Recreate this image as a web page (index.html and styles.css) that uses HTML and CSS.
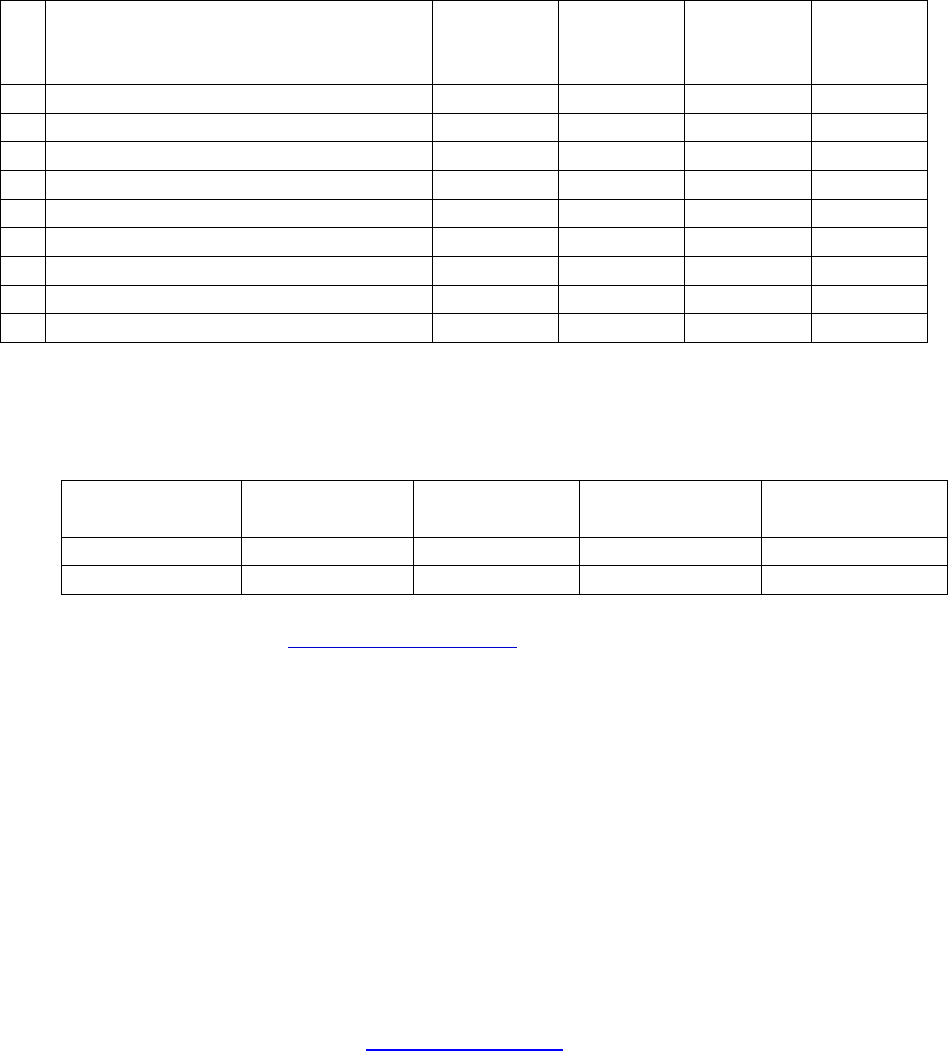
FILE: index.html
```html
<!DOCTYPE html>
<html>
<head>
<meta charset="utf-8">
<link rel="stylesheet" href="styles.css">
</head>
<body>
<table class="grid grid-main">
  <colgroup>
    <col class="c1"><col class="c2"><col class="c3"><col class="c4"><col class="c5"><col class="c6">
  </colgroup>
  <tr class="head"><td></td><td></td><td></td><td></td><td></td><td></td></tr>
  <tr class="row"><td></td><td></td><td></td><td></td><td></td><td></td></tr>
  <tr class="row"><td></td><td></td><td></td><td></td><td></td><td></td></tr>
  <tr class="row"><td></td><td></td><td></td><td></td><td></td><td></td></tr>
  <tr class="row"><td></td><td></td><td></td><td></td><td></td><td></td></tr>
  <tr class="row"><td></td><td></td><td></td><td></td><td></td><td></td></tr>
  <tr class="row"><td></td><td></td><td></td><td></td><td></td><td></td></tr>
  <tr class="row"><td></td><td></td><td></td><td></td><td></td><td></td></tr>
  <tr class="row"><td></td><td></td><td></td><td></td><td></td><td></td></tr>
  <tr class="row"><td></td><td></td><td></td><td></td><td></td><td></td></tr>
</table>

<table class="grid grid-sub">
  <colgroup>
    <col class="d1"><col class="d2"><col class="d3"><col class="d4"><col class="d5">
  </colgroup>
  <tr class="head2"><td></td><td></td><td></td><td></td><td></td></tr>
  <tr class="row2a"><td></td><td></td><td></td><td></td><td></td></tr>
  <tr class="row2b"><td></td><td></td><td></td><td></td><td></td></tr>
</table>

<div class="link-line first"><span class="link-rule"></span></div>
<div class="link-line second"><span class="link-rule"></span></div>
</body>
</html>
```

FILE: styles.css
```css
html, body {
  margin: 0;
  padding: 0;
  background: #ffffff;
  font-family: "Liberation Sans", Arial, sans-serif;
}

.grid {
  border-collapse: collapse;
  table-layout: fixed;
}

.grid td {
  border: 1px solid #000000;
  padding: 0;
}

.grid-main {
  width: 928px;
}

.c1 { width: 45px; }
.c2 { width: 387px; }
.c3 { width: 126px; }
.c4 { width: 126px; }
.c5 { width: 127px; }
.c6 { width: 116px; }

.grid-main .head { height: 84px; }
.grid-main .row { height: 28.67px; }

.grid-sub {
  width: 887px;
  margin-left: 61px;
  margin-top: 137px;
}

.d1 { width: 180px; }
.d2 { width: 172px; }
.d3 { width: 166px; }
.d4 { width: 182px; }
.d5 { width: 186px; }

.grid-sub .head2 { height: 57px; }
.grid-sub .row2a { height: 28px; }
.grid-sub .row2b { height: 29px; }

.link-line {
  display: flex;
}

.link-rule {
  display: block;
}

.link-line.first {
  margin-top: 52px;
  padding-left: 288px;
}

.link-line.first .link-rule {
  width: 229px;
  border-bottom: 1px solid #0000cc;
}

.link-line.second {
  margin-top: 401px;
  padding-left: 366px;
}

.link-line.second .link-rule {
  width: 197px;
  border-bottom: 2px solid #0000ff;
}
```
